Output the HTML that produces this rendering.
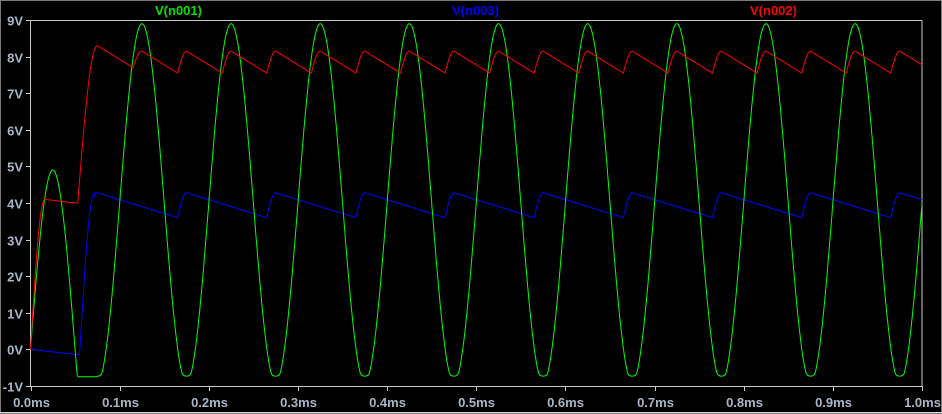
<!DOCTYPE html>
<html><head><style>
html,body{margin:0;padding:0;background:#000;}
#w{position:relative;width:942px;height:414px;background:#000;overflow:hidden;}
svg{position:absolute;left:0;top:0;}
text{font-family:"Liberation Sans",Arial,sans-serif;font-weight:bold;font-size:13px;}
</style></head><body><div id="w">
<svg width="942" height="414" viewBox="0 0 942 414">
<rect x="0.5" y="0.5" width="941" height="413" fill="none" stroke="#7a7a7a"/>
<line x1="0" y1="412.5" x2="942" y2="412.5" stroke="#d8d8d8"/>
<g stroke="#c8c8c8" stroke-width="1" fill="none">
<rect x="30.5" y="20.5" width="891.5" height="366"/>
</g>
<g id="ticks" stroke="#c8c8c8"></g>
<g id="lbl" fill="#a9b6c6"></g>
<text x="155" y="15" fill="#00e000">V(n001)</text>
<text x="452" y="15" fill="#0000ff">V(n003)</text>
<text x="750" y="15" fill="#ff0000">V(n002)</text>
<polyline id="pb" fill="none" stroke="#0000ff" stroke-width="1"/>
<polyline id="pg" fill="none" stroke="#00ff00" stroke-width="1"/>
<polyline id="pr" fill="none" stroke="#ff0000" stroke-width="1"/>
</svg>
<script>
var X=function(t){return 30.5+891.5*t},Y=function(v){return 349.4-36.6*v};
var ns="http://www.w3.org/2000/svg";
var tk=document.getElementById('ticks'),lb=document.getElementById('lbl');
function el(p,n,a,txt){var e=document.createElementNS(ns,n);for(var k in a)e.setAttribute(k,a[k]);if(txt)e.textContent=txt;p.appendChild(e);}
for(var v=-1;v<=9;v++){var y=Math.round(Y(v))+0.5;el(tk,'line',{x1:26,y1:y,x2:30,y2:y});el(lb,'text',{x:23,y:y+5,'text-anchor':'end'},v+'V');}
for(var i=0;i<=10;i++){var x=Math.round(X(i/10))+0.5;el(tk,'line',{x1:x,y1:386,x2:x,y2:391});el(lb,'text',{x:x,y:407,'text-anchor':'middle'},(i/10).toFixed(1)+'ms');}
function g(t){var s=Math.sin(2*Math.PI*10*t);var v;if(t<0.075)v=4.9*s;else v=4.0+4.9*s;
 var c=-0.75;if(v<c+0.15){var d=c+0.15-v;v=c+0.15*Math.exp(-d/0.15);}return v;}
function b(t){if(t<0.055)return -0.15*t/0.055;if(t<0.072)return -0.15+(4.43)*Math.sin(Math.PI/2*(t-0.055)/0.017);
 var k=Math.floor((t-0.075)/0.1);var tp=0.075+0.1*k;var dt=t-tp;var pk=4.28;
 if(dt<0.09)return pk-0.68*dt/0.09;return 3.6+0.68*Math.sin(Math.PI/2*(dt-0.09)/0.01);}
function r(t){if(t<0.016)return 4.1*Math.sin(Math.PI/2*t/0.016);if(t<0.05)return 4.1-0.1*(t-0.016)/0.034;if(t<0.053)return 4.0;
 if(t<0.075)return 4.0+4.3*Math.sin(Math.PI/2*(t-0.053)/0.022);
 var k=Math.floor((t-0.075)/0.05);var tp=0.075+0.05*k;var dt=t-tp;var pk=(k==0)?8.3:8.15;
 if(dt<0.04)return pk-0.6*dt/0.04;var lo=pk-0.6;return lo+(8.15-lo)*Math.sin(Math.PI/2*(dt-0.04)/0.01);}
function pts(f){var a=[];for(var t=0;t<=1.00001;t+=0.0005){a.push(X(t).toFixed(1)+','+Y(f(t)).toFixed(1));}return a.join(' ');}
document.getElementById('pg').setAttribute('points',pts(g));
document.getElementById('pb').setAttribute('points',pts(b));
document.getElementById('pr').setAttribute('points',pts(r));
</script>
</div></body></html>
